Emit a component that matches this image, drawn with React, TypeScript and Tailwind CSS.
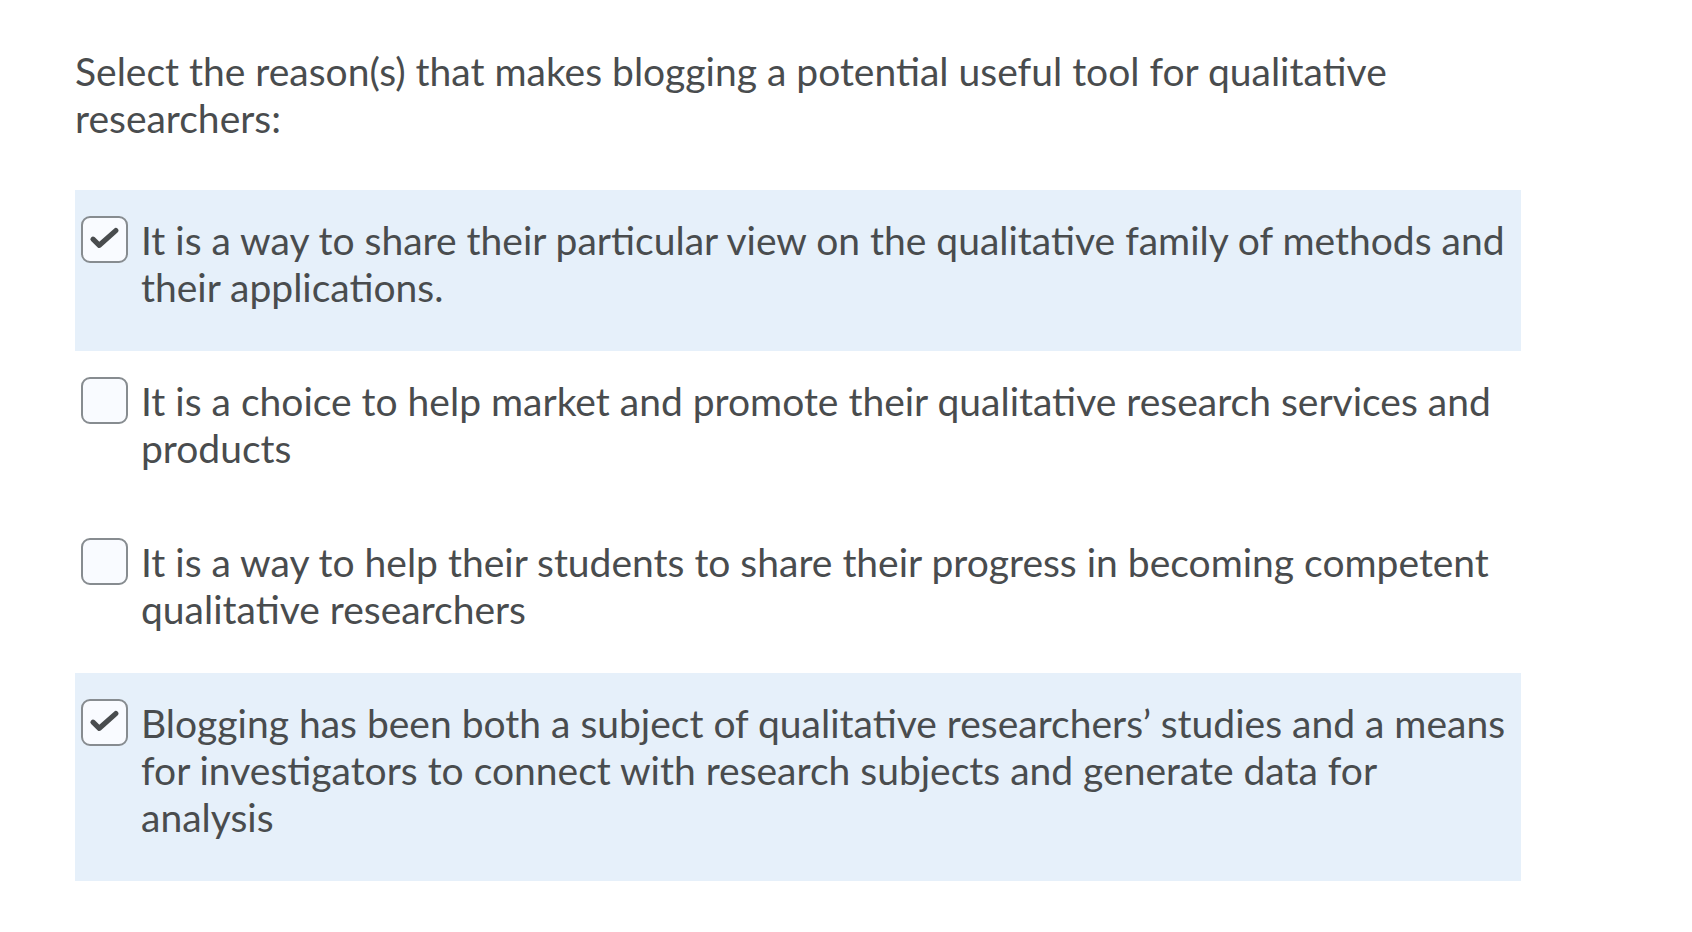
import React from "react";

const options = [
  {
    text: "It is a way to share their particular view on the qualitative family of methods and their applications.",
    checked: true,
  },
  {
    text: "It is a choice to help market and promote their qualitative research services and products",
    checked: false,
  },
  {
    text: "It is a way to help their students to share their progress in becoming competent qualitative researchers",
    checked: false,
  },
  {
    text: "Blogging has been both a subject of qualitative researchers\u2019 studies and a means for investigators to connect with research subjects and generate data for analysis",
    checked: true,
  },
];

function Checkbox({ checked }: { checked: boolean }) {
  return (
    <div className="w-[47px] h-[47px] -mt-[1px] shrink-0 rounded-[9px] border-[2px] border-[#878c90] bg-[#f9fbff] flex items-center justify-center">
      {checked && (
        <svg width="47" height="47" viewBox="0 0 47 47" className="-m-[2px]">
          <path
            d="M12 23.2 L18.3 29.3 L34.8 14.6"
            fill="none"
            stroke="#494c4e"
            strokeWidth="5.2"
            strokeLinecap="round"
            strokeLinejoin="round"
          />
        </svg>
      )}
    </div>
  );
}

export default function App() {
  return (
    <div
      className="min-h-[932px] bg-white pl-[75px] pt-[48px] text-[#494c4e]"
      style={{ fontFamily: "Lato, 'Noto Sans', sans-serif" }}
    >
      <div className="w-[1446px]">
        <p className="text-[39px] leading-[47px] pr-[100px]">
          Select the reason(s) that makes blogging a potential useful tool for qualitative researchers:
        </p>
        <div className="mt-[48px] flex flex-col">
          {options.map((o, i) => (
            <div
              key={i}
              className={`flex items-start gap-[13px] pl-[6px] pr-[10px] pt-[27px] pb-[40px] ${
                o.checked ? "bg-[#e6f0fa]" : "bg-white"
              }`}
            >
              <Checkbox checked={o.checked} />
              <span className="text-[39px] leading-[47px]">{o.text}</span>
            </div>
          ))}
        </div>
      </div>
    </div>
  );
}
